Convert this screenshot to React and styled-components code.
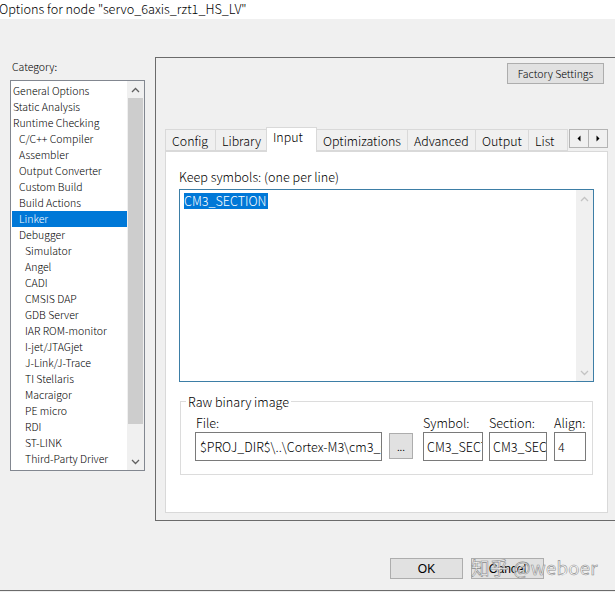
import React from "react";
import styled, { createGlobalStyle } from "styled-components";

const Global = createGlobalStyle`
  html, body { margin: 0; padding: 0; background: #f0f0f0; }
  * { box-sizing: border-box; }
`;

const Root = styled.div`
  width: 615px;
  height: 592px;
  background: #f0f0f0;
  overflow: hidden;
  position: relative;
  display: flex;
  flex-direction: column;
  font-family: "Noto Sans CJK SC", "Noto Sans", sans-serif;
  font-weight: 300;
  font-size: 12px;
  color: #000;
`;

const TitleBar = styled.div`
  height: 19px;
  background: #fff;
  font-size: 12.7px;
  line-height: 17px;
  white-space: nowrap;
  margin-left: -1px;
`;

const Body = styled.div`
  height: 502px;
  display: flex;
  gap: 10px;
  padding: 38px 0 0 10px;
`;

const LeftCol = styled.div`
  width: 135px;
  flex: none;
  display: flex;
  flex-direction: column;
  padding-top: 3px;
`;

const CategoryLabel = styled.div`
  font-size: 10.5px;
  line-height: 14px;
  height: 14px;
  padding-left: 2px;
  margin-bottom: 6px;
`;

const ListBox = styled.div`
  width: 135px;
  height: 391px;
  border: 1px solid #828790;
  background: #fff;
  display: flex;
`;

const ListItems = styled.div`
  flex: 1;
  padding: 2px 0 0 1px;
  overflow: hidden;
  font-size: 10.5px;
`;

const Item = styled.div`
  height: 16px;
  line-height: 16px;
  white-space: nowrap;
  padding-left: ${(p) => 1 + p.$indent * 6}px;
  background: ${(p) => (p.$selected ? "#0078d7" : "transparent")};
  color: ${(p) => (p.$selected ? "#fff" : "#000")};
`;

const VScroll = styled.div`
  width: 17px;
  flex: none;
  display: flex;
  flex-direction: column;
  background: #f0f0f0;
`;

const ScrollBtn = styled.div`
  height: 17px;
  flex: none;
  display: flex;
  align-items: center;
  justify-content: center;
`;

const Thumb = styled.div`
  height: ${(p) => p.$h}px;
  margin: 0 1px;
  background: #cdcdcd;
  flex: none;
`;

const TrackRest = styled.div`
  flex: 1;
`;

const Panel = styled.div`
  width: 470px;
  height: 464px;
  flex: none;
  border: 1px solid #6b6b6b;
  padding: 5px 16px 0 9px;
  display: flex;
  flex-direction: column;
`;

const FactoryRow = styled.div`
  display: flex;
  justify-content: flex-end;
  padding-right: 4px;
`;

const Button = styled.div`
  width: ${(p) => p.$w}px;
  height: ${(p) => p.$h || 21}px;
  background: #e1e1e1;
  border: 1px solid #adadad;
  display: flex;
  align-items: center;
  justify-content: center;
  font-size: ${(p) => p.$fs || 12}px;
  white-space: nowrap;
  flex: none;
`;

const TabStrip = styled.div`
  margin-top: 43px;
  height: 24px;
  display: flex;
  align-items: flex-end;
  position: relative;
  z-index: 1;
`;

const Tab = styled.div`
  height: ${(p) => (p.$active ? 25 : 22)}px;
  margin-bottom: ${(p) => (p.$active ? -1 : 0)}px;
  width: ${(p) => p.$w}px;
  padding: ${(p) => (p.$active ? "1px" : "3px")} 0 0 ${(p) => p.$pl || 6}px;
  background: ${(p) => (p.$active ? "#fff" : "#f0f0f0")};
  border: 1px solid #d9d9d9;
  border-bottom: ${(p) => (p.$active ? "none" : "1px solid #d9d9d9")};
  margin-left: -1px;
  font-size: 12.4px;
  line-height: 17px;
  white-space: nowrap;
  overflow: hidden;
  &:first-child { margin-left: 0; }
`;

const TabNav = styled.div`
  margin-left: auto;
  margin-bottom: 3px;
  display: flex;
`;

const TabNavBtn = styled.div`
  width: 20px;
  height: 19px;
  background: #f0f0f0;
  border: 1px solid #b4b4b4;
  margin-left: -1px;
  display: flex;
  align-items: center;
  justify-content: center;
`;

const TabPanel = styled.div`
  height: 362px;
  background: #fff;
  border: 1px solid #d9d9d9;
  padding: 16px 13px 0 13px;
  display: flex;
  flex-direction: column;
`;

const FieldLabel = styled.div`
  font-size: 12.6px;
  line-height: 17px;
  height: 17px;
  white-space: nowrap;
  padding-left: ${(p) => p.$pl || 0}px;
`;

const TextArea = styled.div`
  margin-top: 4px;
  height: 193px;
  border: 1px solid #3d7ea6;
  display: flex;
  flex: none;
`;

const TextContent = styled.div`
  flex: 1;
  padding: 2px 0 0 4px;
`;

const Selection = styled.span`
  display: inline-block;
  background: #0078d7;
  color: #fff;
  font-size: 12.6px;
  line-height: 16px;
  padding-right: 1px;
`;

const Group = styled.fieldset`
  margin: 11px 1px 0 1px;
  border: 1px solid #dcdcdc;
  padding: 4px 6px 13px 5px;
  min-width: 0;
`;

const Legend = styled.legend`
  padding: 0 2px;
  font-size: 12.6px;
  line-height: 17px;
`;

const FieldsRow = styled.div`
  display: flex;
  align-items: flex-end;
  padding-left: 9px;
`;

const Field = styled.div`
  display: flex;
  flex-direction: column;
  width: ${(p) => p.$w}px;
  margin-left: ${(p) => p.$ml || 0}px;
  flex: none;
  & > ${FieldLabel} { margin-bottom: 1px; }
`;

const Input = styled.input`
  width: 100%;
  height: 29px;
  border: 1px solid #7a7a7a;
  padding: 0 0 0 ${(p) => p.$pl || 3}px;
  margin: 0;
  font-family: "Noto Sans CJK SC", "Noto Sans", sans-serif;
  font-weight: 300;
  font-size: 12.6px;
  color: #000;
  background: #fff;
  outline: none;
`;

const BrowseWrap = styled.div`
  margin-left: 7px;
  margin-bottom: 2px;
`;

const Footer = styled.div`
  height: 70px;
  border-bottom: 1px solid #6b6b6b;
  display: flex;
  justify-content: flex-end;
  gap: 8px;
  padding: 37px 71px 0 0;
  position: relative;
  & ${Button} { font-family: "Liberation Sans", Arial, sans-serif; font-weight: 400; }
`;

const Watermark = styled.div`
  position: absolute;
  left: 471px;
  top: 35px;
  font-family: "Noto Sans CJK SC", sans-serif;
  font-weight: 400;
  font-size: 18.5px;
  line-height: 22px;
  color: rgba(255, 255, 255, 0.9);
  -webkit-text-stroke: 0.6px #8a8a8a;
  white-space: nowrap;
  letter-spacing: 0.3px;
`;

const Chevron = ({ up, color = "#606060" }) => (
  <svg width="9" height="6" viewBox="0 0 9 6">
    <path
      d={up ? "M1 5 L4.5 1.5 L8 5" : "M1 1 L4.5 4.5 L8 1"}
      fill="none"
      stroke={color}
      strokeWidth="1.3"
    />
  </svg>
);

const Tri = ({ left }) => (
  <svg width="4" height="7" viewBox="0 0 4 7">
    <path d={left ? "M3.5 0.5 L0.5 3.5 L3.5 6.5 Z" : "M0.5 0.5 L3.5 3.5 L0.5 6.5 Z"} fill="#000" />
  </svg>
);

const categories = [
  ["General Options", 0],
  ["Static Analysis", 0],
  ["Runtime Checking", 0],
  ["C/C++ Compiler", 1],
  ["Assembler", 1],
  ["Output Converter", 1],
  ["Custom Build", 1],
  ["Build Actions", 1],
  ["Linker", 1],
  ["Debugger", 1],
  ["Simulator", 2],
  ["Angel", 2],
  ["CADI", 2],
  ["CMSIS DAP", 2],
  ["GDB Server", 2],
  ["IAR ROM-monitor", 2],
  ["I-jet/JTAGjet", 2],
  ["J-Link/J-Trace", 2],
  ["TI Stellaris", 2],
  ["Macraigor", 2],
  ["PE micro", 2],
  ["RDI", 2],
  ["ST-LINK", 2],
  ["Third-Party Driver", 2],
];

const tabs = [
  ["Config", 51],
  ["Library", 52],
  ["Input", 51, true],
  ["Optimizations", 92],
  ["Advanced", 69],
  ["Output", 54],
  ["List", 40],
];

export default function App() {
  return (
    <>
      <Global />
      <Root>
        <TitleBar>Options for node "servo_6axis_rzt1_HS_LV"</TitleBar>
        <Body>
          <LeftCol>
            <CategoryLabel>Category:</CategoryLabel>
            <ListBox>
              <ListItems>
                {categories.map(([name, indent]) => (
                  <Item key={name} $indent={indent} $selected={name === "Linker"}>
                    {name}
                  </Item>
                ))}
              </ListItems>
              <VScroll>
                <ScrollBtn>
                  <Chevron up />
                </ScrollBtn>
                <Thumb $h={326} />
                <TrackRest />
                <ScrollBtn>
                  <Chevron />
                </ScrollBtn>
              </VScroll>
            </ListBox>
          </LeftCol>
          <Panel>
            <FactoryRow>
              <Button $w={97} $fs={10.5}>Factory Settings</Button>
            </FactoryRow>
            <TabStrip>
              {tabs.map(([t, w, active]) => (
                <Tab key={t} $w={w} $active={active}>
                  {t}
                </Tab>
              ))}
              <TabNav>
                <TabNavBtn>
                  <Tri left />
                </TabNavBtn>
                <TabNavBtn>
                  <Tri />
                </TabNavBtn>
              </TabNav>
            </TabStrip>
            <TabPanel>
              <FieldLabel>Keep symbols: (one per line)</FieldLabel>
              <TextArea>
                <TextContent>
                  <Selection>CM3_SECTION</Selection>
                </TextContent>
                <VScroll>
                  <ScrollBtn>
                    <Chevron up color="#c4c4c4" />
                  </ScrollBtn>
                  <TrackRest />
                  <ScrollBtn>
                    <Chevron color="#c4c4c4" />
                  </ScrollBtn>
                </VScroll>
              </TextArea>
              <Group>
                <Legend>Raw binary image</Legend>
                <FieldsRow>
                  <Field $w={187}>
                    <FieldLabel $pl={1}>File:</FieldLabel>
                    <Input readOnly $pl={4} value={"$PROJ_DIR$\\..\\Cortex-M3\\cm3_section.bin"} />
                  </Field>
                  <BrowseWrap>
                    <Button $w={24} $h={26} $fs={11}>...</Button>
                  </BrowseWrap>
                  <Field $w={60} $ml={10}>
                    <FieldLabel>Symbol:</FieldLabel>
                    <Input readOnly value="CM3_SECTION" />
                  </Field>
                  <Field $w={58} $ml={6}>
                    <FieldLabel>Section:</FieldLabel>
                    <Input readOnly value="CM3_SECTION" />
                  </Field>
                  <Field $w={32} $ml={7}>
                    <FieldLabel>Align:</FieldLabel>
                    <Input readOnly value="4" />
                  </Field>
                </FieldsRow>
              </Group>
            </TabPanel>
          </Panel>
        </Body>
        <Footer>
          <Button $w={73}>OK</Button>
          <Button $w={73}>Cancel</Button>
          <Watermark>知乎 @weboer</Watermark>
        </Footer>
      </Root>
    </>
  );
}
